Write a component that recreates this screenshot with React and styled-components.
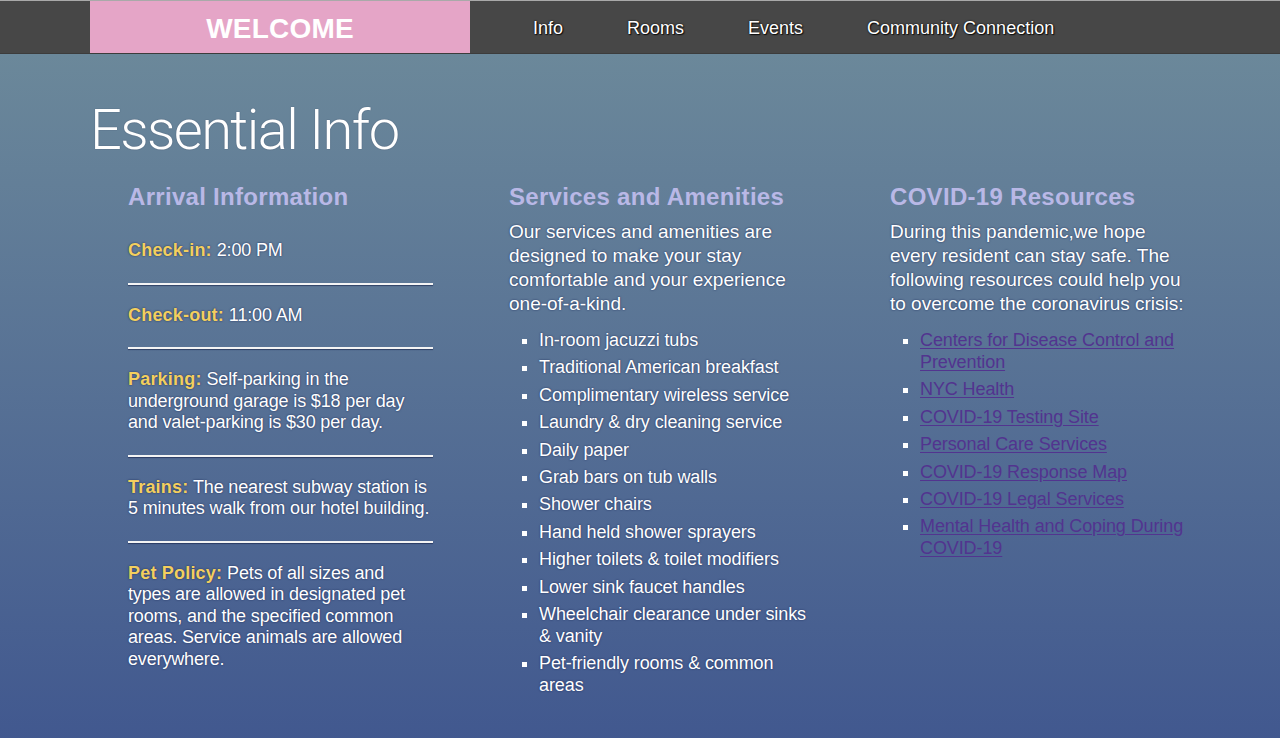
import React from 'react'
import styled, { createGlobalStyle } from 'styled-components'

const GlobalStyle = createGlobalStyle`
  html, body {
    margin: 0;
    padding: 0;
    height: 100%;
  }
  body {
    font-family: "Liberation Sans", Arial, Helvetica, sans-serif;
    background: #41588f;
  }
  #root {
    min-height: 100%;
  }
`

const arrival = [
  { label: 'Check-in:', text: '2:00 PM' },
  { label: 'Check-out:', text: '11:00 AM' },
  { label: 'Parking:', text: 'Self-parking in the underground garage is $18 per day and valet-parking is $30 per day.' },
  { label: 'Trains:', text: 'The nearest subway station is 5 minutes walk from our hotel building.' },
  { label: 'Pet Policy:', text: 'Pets of all sizes and types are allowed in designated pet rooms, and the specified common areas. Service animals are allowed everywhere.' },
]

const amenities = [
  'In-room jacuzzi tubs',
  'Traditional American breakfast',
  'Complimentary wireless service',
  'Laundry & dry cleaning service',
  'Daily paper',
  'Grab bars on tub walls',
  'Shower chairs',
  'Hand held shower sprayers',
  'Higher toilets & toilet modifiers',
  'Lower sink faucet handles',
  'Wheelchair clearance under sinks & vanity',
  'Pet-friendly rooms & common areas',
]

const resources = [
  'Centers for Disease Control and Prevention',
  'NYC Health',
  'COVID-19 Testing Site',
  'Personal Care Services',
  'COVID-19 Response Map',
  'COVID-19 Legal Services',
  'Mental Health and Coping During COVID-19',
]

const App = () => {
  return (
    <Page>
      <GlobalStyle />
      <Nav>
        <Welcome>WELCOME</Welcome>
        <NavLinks>
          <NavLink>Info</NavLink>
          <NavLink>Rooms</NavLink>
          <NavLink>Events</NavLink>
          <NavLink>Community Connection</NavLink>
        </NavLinks>
      </Nav>
      <Main>
        <Title>Essential Info</Title>
        <Columns>
          <Column>
            <Heading>Arrival Information</Heading>
            <InfoList>
              {arrival.map((a, i) => (
                <React.Fragment key={a.label}>
                  {i > 0 && <Divider />}
                  <Info>
                    <Label>{a.label}</Label> {a.text}
                  </Info>
                </React.Fragment>
              ))}
            </InfoList>
          </Column>
          <Column>
            <Heading>Services and Amenities</Heading>
            <Intro>
              Our services and amenities are designed to make your stay
              comfortable and your experience one-of-a-kind.
            </Intro>
            <Bullets>
              {amenities.map((a) => (
                <Item key={a}>{a}</Item>
              ))}
            </Bullets>
          </Column>
          <Column>
            <Heading>COVID-19 Resources</Heading>
            <Intro>
              During this pandemic,we hope every resident can stay safe. The
              following resources could help you to overcome the coronavirus
              crisis:
            </Intro>
            <Bullets>
              {resources.map((r) => (
                <Item key={r}>
                  <Link href="#">{r}</Link>
                </Item>
              ))}
            </Bullets>
          </Column>
        </Columns>
      </Main>
    </Page>
  )
}

const Page = styled.div`
  display: flex;
  flex-direction: column;
  min-height: 100vh;
`

const Nav = styled.nav`
  display: flex;
  align-items: stretch;
  height: 52px;
  background-color: #474747;
  border-top: 1px solid #a9a9a9;
  border-bottom: 1px solid #3c3c3c;
`

const Welcome = styled.div`
  width: 380px;
  margin-left: 90px;
  padding-top: 3px;
  background-color: #e5a5c7;
  color: #fff;
  font-weight: bold;
  font-size: 28px;
  display: flex;
  justify-content: center;
  align-items: center;
  letter-spacing: 0.2px;
`

const NavLinks = styled.ul`
  display: flex;
  align-items: center;
  list-style: none;
  margin: 0 0 0 31px;
  padding: 0;
`

const NavLink = styled.li`
  padding: 2px 32px 0;
  color: #fff;
  font-size: 18px;
  letter-spacing: 0;
  text-shadow: 0 0 2px #000, 1px 1px 1px #111;
`

const Main = styled.main`
  flex: 1;
  background: linear-gradient(to bottom, #6b889a 0%, #41588f 100%);
  padding: 38px 0 40px 90px;
`

const Title = styled.h1`
  margin: 0;
  font-family: Roboto, "Liberation Sans", sans-serif;
  font-weight: 300;
  font-size: 56px;
  line-height: 76px;
  color: #fff;
  letter-spacing: -1.6px;
  text-shadow: 0 0 1px rgba(20, 30, 60, 0.6);
`

const Columns = styled.div`
  display: grid;
  grid-template-columns: repeat(3, 300px);
  column-gap: 81px;
  margin: 14px 0 0 38px;
`

const Column = styled.section`
  display: flex;
  flex-direction: column;
`

const Heading = styled.h2`
  margin: 0;
  font-size: 24px;
  line-height: 30px;
  font-weight: bold;
  color: #b9b8e6;
  letter-spacing: 0.3px;
`

const InfoList = styled.div`
  display: flex;
  flex-direction: column;
  margin-top: 28px;
  width: 305px;
`

const Info = styled.p`
  margin: 0;
  padding-right: 3px;
  font-size: 18px;
  line-height: 21.5px;
  color: #fff;
  letter-spacing: -0.15px;
  text-shadow: 0 0 2px #1d2c5a;
`

const Label = styled.span`
  color: #f3cf5e;
  font-weight: bold;
  letter-spacing: 0.2px;
`

const Divider = styled.hr`
  width: 100%;
  height: 2px;
  margin: 21px 0 20px;
  border: none;
  background: #f4f4f4;
  box-shadow: 0 1px 1px rgba(20, 30, 70, 0.6);
`

const Intro = styled.p`
  margin: 8px 0 0;
  font-size: 19px;
  line-height: 24px;
  color: #fff;
  letter-spacing: 0;
  text-shadow: 0 0 2px #1d2c5a;
`

const Bullets = styled.ul`
  margin: 13px 0 0;
  padding-left: 30px;
  list-style: square;
`

const Item = styled.li`
  font-size: 18px;
  line-height: 22px;
  margin-bottom: 5.4px;
  color: #fff;
  letter-spacing: -0.1px;
  text-shadow: 0 0 2px #1d2c5a;
`

const Link = styled.a`
  color: #52348f;
  text-shadow: none;
  text-decoration: underline;
  text-underline-offset: 2px;
`

export default App
